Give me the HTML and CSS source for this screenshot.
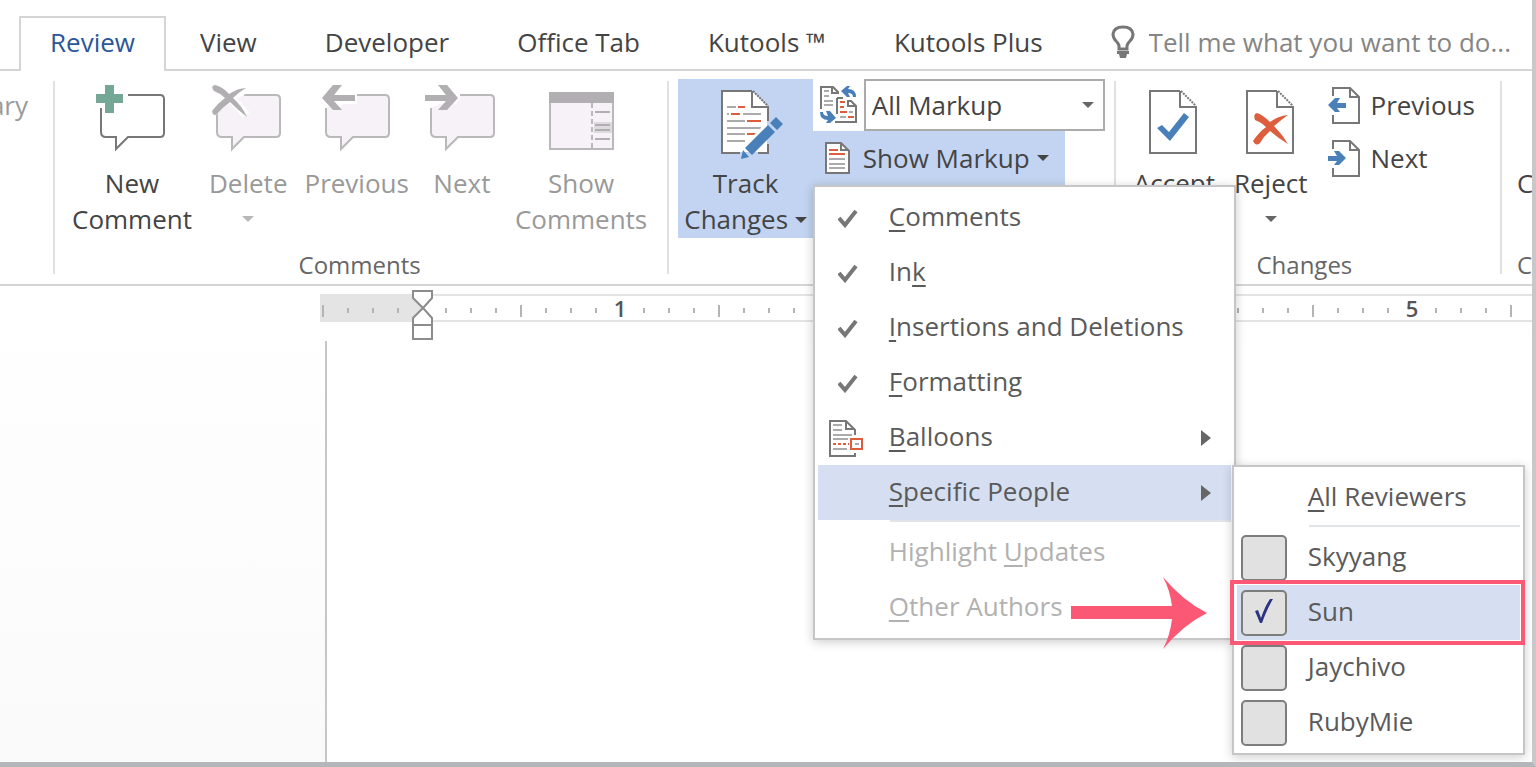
FILE: index.html
```html
<!DOCTYPE html>
<html lang="en">
<head>
<meta charset="utf-8">
<title>Document - Review</title>
<link rel="stylesheet" href="styles.css">
</head>
<body>
<svg class="defs" aria-hidden="true">
  <symbol id="bubble" viewBox="0 0 72 76">
    <path d="M32 11H64Q68 11 68 15V49Q68 53 64 53H32L20 65V53H10Q5 53 5 48V24"/>
  </symbol>
  <symbol id="page" viewBox="0 0 72 76">
    <path d="M12 7H42L58 23V69H12Z" fill="#fff" stroke="none"/>
    <path d="M42 7H12V69H58V23H42V7" fill="none" stroke="#777" stroke-width="2"/>
    <path d="M43 7L58 22" fill="none" stroke="#777" stroke-width="2" stroke-dasharray="2 1"/>
  </symbol>
  <symbol id="tick" viewBox="0 0 20 20">
    <path d="M1 10L7 17L18 3" fill="none" stroke="#777" stroke-width="4"/>
  </symbol>
</svg>

<div class="app">
  <nav class="tabs">
    <button class="tab tab-active" type="button">Review</button>
    <button class="tab" type="button">View</button>
    <button class="tab" type="button">Developer</button>
    <button class="tab" type="button">Office Tab</button>
    <button class="tab" type="button">Kutools ™</button>
    <button class="tab" type="button">Kutools Plus</button>
    <label class="tell">
      <svg width="24" height="34" viewBox="0 0 24 34" aria-hidden="true"><path d="M8 24V21Q8 19 5 16Q2 13 2 9Q3 2 12 2Q21 2 22 9Q22 13 19 16Q16 19 16 21V24Z" fill="none" stroke="#777" stroke-width="3"/><path d="M6 26H18V29H16L15 33H9L8 29H6Z" fill="#777"/></svg>
      <input type="text" placeholder="Tell me what you want to do..." aria-label="Tell me what you want to do">
    </label>
  </nav>

  <div class="ribbon">
    <section class="group group-first">
      <div class="group-body"><span class="cut-label">ary</span></div>
    </section>

    <section class="group group-comments">
      <div class="group-body">
        <button class="big" type="button">
          <svg class="icon" viewBox="0 0 72 76"><use href="#bubble" width="72" height="76" class="line-dark"/><path d="M-1 0H28V22H-1Z" fill="#fff"/><path d="M9 1H18V10H27V19H18V29H9V19H0V10H9Z" fill="#74a795"/></svg>
          <span>New<br>Comment</span>
        </button>
        <button class="big" type="button" disabled>
          <svg class="icon" viewBox="0 0 72 76"><use href="#bubble" width="72" height="76" class="line-light"/><path d="M3 4Q20 12 34 31M1 28Q15 9 35 5" fill="none" stroke="#fff" stroke-width="9"/><path d="M3 1Q11 3 17 10Q26 4 34 4Q27 8 21 14Q30 22 35 33Q26 26 18 18Q11 23 5 30Q1 33 0 27Q6 19 13 14Q8 9 2 7Q-2 2 3 1Z" fill="#b1afb1"/></svg>
          <span>Delete</span>
          <svg class="caret" viewBox="0 0 12 6"><path d="M0 0H12L6 6Z"/></svg>
        </button>
        <button class="big" type="button" disabled>
          <svg class="icon" viewBox="0 0 72 76"><use href="#bubble" width="72" height="76" class="line-light"/><path d="M0 8H36V20H22L20 23H0Z" fill="#fff"/><path d="M1 14L12 1H21L13 11H34V17H13L21 26H12Z" fill="#b1afb1"/></svg>
          <span>Previous</span>
        </button>
        <button class="big" type="button" disabled>
          <svg class="icon" viewBox="0 0 72 76"><use href="#bubble" width="72" height="76" class="line-light"/><path d="M-2 8H34V14L30 20H-2Z" fill="#fff"/><path d="M32 14L21 1H12L20 11H-1V17H20L12 26H21Z" fill="#b1afb1"/></svg>
          <span>Next</span>
        </button>
        <button class="big" type="button" disabled>
          <svg class="icon" viewBox="0 0 72 76"><path d="M5 9H68V65H5Z" fill="#f6f2f7" stroke="#bab8ba" stroke-width="2"/><path d="M4 8H69V19H4Z" fill="#b1afb1"/><path d="M47 19V65" stroke="#bab8ba" stroke-width="2" stroke-dasharray="5 3"/><path d="M49 38H67V49H49Z" fill="#dedbdf"/><path d="M50 28H65M50 41H65M50 46H65M50 55H65" stroke="#b1afb1" stroke-width="2"/></svg>
          <span>Show<br>Comments</span>
        </button>
      </div>
      <h2 class="group-name">Comments</h2>
    </section>

    <section class="group group-tracking">
      <div class="group-body">
        <button class="big big-on" type="button">
          <svg class="icon" viewBox="0 0 72 76"><use href="#page" width="72" height="76"/><path d="M17 23H26M17 30H19M33 30H51M17 37H35M17 44H51M17 50H35M17 57H35" stroke="#ababab" stroke-width="2"/><path d="M28 23H35M21 30H30M37 37H51M37 50H47" stroke="#dc5e3c" stroke-width="2"/><path d="M31 68L35 60L57 38V68Z" fill="#fff"/><path d="M57 37H60V60H57ZM30 68H48V71H30Z" fill="#c2d4f1"/><path d="M35 64L58 41L65 48L42 71ZM60 39L66 33L73 40L67 46ZM33 66L39 73L31 75Z" fill="#4a80ba"/></svg>
          <span>Track<br>Changes <svg class="caret caret-inline" viewBox="0 0 12 6"><path d="M0 0H12L6 6Z"/></svg></span>
        </button>
        <div class="stack">
          <div class="markup-row">
            <svg class="markup-icon" viewBox="0 0 38 38" aria-hidden="true"><path d="M2 24V2H14L19 7V9M13 2V8H19" fill="none" stroke="#777" stroke-width="2"/><path d="M5 6H10M5 11H10M5 16H14M5 20H14" stroke="#ababab" stroke-width="2"/><path d="M18 13H24M18 13V29M16 37H37V21L32 16H29V21H37" fill="none" stroke="#777" stroke-width="2"/><path d="M21 17H26M21 22H25M21 27H28M29 32H35" stroke="#dc5e3c" stroke-width="2"/><path d="M30 27H34M21 32H27" stroke="#ababab" stroke-width="2"/><path d="M22 6L28 1H31L29 4Q37 4 37 12H34Q34 8 29 8L31 12H28ZM1 27H4Q4 31 9 31L7 26H11L17 33L11 38H7L9 35Q1 35 1 27Z" fill="#4a80ba"/></svg>
            <div class="select-box">
              <select aria-label="Display for review"><option>All Markup</option></select>
              <svg class="caret" viewBox="0 0 12 6"><path d="M0 0H12L6 6Z"/></svg>
            </div>
          </div>
          <button class="show-markup" type="button" aria-expanded="true">
            <svg width="26" height="34" viewBox="0 0 26 34"><path d="M2 2H17L25 10V32H2Z" fill="#fff" stroke="#777" stroke-width="2"/><path d="M17 2V9H25" fill="none" stroke="#777" stroke-width="2"/><path d="M5 9H14M5 13H21" stroke="#dc5e3c" stroke-width="2"/><path d="M5 18H21M5 23H21M5 27H21" stroke="#ababab" stroke-width="2"/></svg>
            <span>Show Markup</span>
            <svg class="caret" viewBox="0 0 12 6"><path d="M0 0H12L6 6Z"/></svg>
          </button>

          <div class="menu" role="menu">
            <button class="item" type="button"><svg class="tick"><use href="#tick"/></svg><span><u>C</u>omments</span></button>
            <button class="item" type="button"><svg class="tick"><use href="#tick"/></svg><span>In<u>k</u></span></button>
            <button class="item" type="button"><svg class="tick"><use href="#tick"/></svg><span><u>I</u>nsertions and Deletions</span></button>
            <button class="item" type="button"><svg class="tick"><use href="#tick"/></svg><span><u>F</u>ormatting</span></button>
            <button class="item" type="button">
              <svg class="balloon" viewBox="0 0 36 38"><path d="M27 34V37H2V2H18L27 11V16M18 2V10H27" fill="none" stroke="#777" stroke-width="2"/><path d="M5 6H14M5 11H14M5 16H24M5 20H20M5 30H19M27 25H31" stroke="#ababab" stroke-width="2"/><path d="M5 25H21" stroke="#dc5e3c" stroke-width="2" stroke-dasharray="3 2"/><path d="M23 20H34V30H23Z" fill="none" stroke="#dc5e3c" stroke-width="2"/></svg>
              <span><u>B</u>alloons</span><svg class="arrow" viewBox="0 0 10 16"><path d="M0 0L10 8L0 16Z"/></svg>
            </button>
            <button class="item item-on" type="button"><i class="blank"></i><span><u>S</u>pecific People</span><svg class="arrow" viewBox="0 0 10 16"><path d="M0 0L10 8L0 16Z"/></svg></button>
            <hr>
            <button class="item" type="button" disabled><i class="blank"></i><span>Highlight <u>U</u>pdates</span></button>
            <button class="item" type="button" disabled><i class="blank"></i><span><u>O</u>ther Authors</span></button>

            <svg class="pointer" viewBox="0 0 136 74" aria-hidden="true"><path d="M0 30H101Q99 14 92 1Q112 25 136 37Q112 49 92 73Q99 60 101 43H0Z" fill="#fb5875"/></svg>

            <div class="submenu">
              <button class="person" type="button"><i class="box-space"></i><span><u>A</u>ll Reviewers</span></button>
              <hr>
              <label class="person"><input type="checkbox"><span>Skyyang</span></label>
              <label class="person person-on"><input type="checkbox" checked><span>Sun</span><svg class="check" viewBox="0 0 20 26"><path d="M1 13L4 12L7 20Q11 8 16 1H19Q13 11 8 25H6Z" fill="#2b3480"/></svg></label>
              <label class="person"><input type="checkbox"><span>Jaychivo</span></label>
              <label class="person"><input type="checkbox"><span>RubyMie</span></label>
            </div>
          </div>
        </div>
      </div>
    </section>

    <section class="group group-changes">
      <div class="group-body">
        <button class="big" type="button">
          <svg class="icon" viewBox="0 0 72 76"><use href="#page" width="72" height="76"/><path d="M19 44L24 41L31 48L46 29L51 33L32 57Z" fill="#4a80ba"/></svg>
          <span>Accept</span>
        </button>
        <button class="big" type="button">
          <svg class="icon" viewBox="0 0 72 76"><use href="#page" width="72" height="76"/><path d="M22 29Q28 31 35 38Q43 32 53 31Q46 36 39 42Q47 50 53 60Q43 54 35 47Q29 52 25 59Q21 63 18 57Q24 48 31 43Q26 38 20 36Q18 30 22 29Z" fill="#dc5e3c"/></svg>
          <span>Reject</span>
          <svg class="caret" viewBox="0 0 12 6"><path d="M0 0H12L6 6Z"/></svg>
        </button>
        <div class="small-col">
          <button class="small" type="button"><svg viewBox="0 0 34 38"><path d="M6 10V2H23L32 11V37H6V29M23 2V11H32" fill="none" stroke="#777" stroke-width="2"/><path d="M1 19L8 12H13L10 17H19V22H10L13 26H8Z" fill="#4a80ba"/></svg><span>Previous</span></button>
          <button class="small" type="button"><svg viewBox="0 0 34 38"><path d="M6 10V2H23L32 11V37H6V29M23 2V11H32" fill="none" stroke="#777" stroke-width="2"/><path d="M19 19L12 12H7L10 17H1V22H10L7 26H12Z" fill="#4a80ba"/></svg><span>Next</span></button>
        </div>
      </div>
      <h2 class="group-name">Changes</h2>
    </section>

    <section class="group group-last">
      <div class="group-body"><span class="last-label">C</span></div>
      <h2 class="group-name">C</h2>
    </section>
  </div>

  <main class="workspace">
    <div class="ruler">
      <svg width="100%" height="50" aria-hidden="true">
        <defs><pattern id="ticks" x="-96" y="0" width="198" height="50" patternUnits="userSpaceOnUse"><path d="M24 18V23M49 18V23M74 18V23M124 18V23M149 18V23M174 18V23" stroke="#b4b4b4" stroke-width="2"/><path d="M99 15V27" stroke="#b4b4b4" stroke-width="2"/></pattern></defs>
        <rect x="0" y="4" width="100%" height="28" fill="#e4e4e4"/>
        <rect x="102" y="6" width="100%" height="24" fill="#fff"/>
        <rect width="100%" height="50" fill="url(#ticks)"/>
        <text x="300" y="27">1</text>
        <text x="1092" y="27">5</text>
        <path d="M93 1H112V8L103 18L112 28V49H93V28L103 18L93 8Z" fill="#fff" stroke="#8c8c8c" stroke-width="2"/><path d="M93 35H112" stroke="#8c8c8c" stroke-width="2"/>
      </svg>
    </div>
    <div class="paper"></div>
  </main>
</div>
</body>
</html>
```

FILE: styles.css
```css
* { box-sizing: border-box; }

body {
  margin: 0;
  background: #fff;
  color: #444;
  font: 26px/36px "Open Sans", "Noto Sans", sans-serif;
}

button, input, select {
  margin: 0;
  padding: 0;
  border: 0;
  background: none;
  color: inherit;
  font: inherit;
}

.defs { position: absolute; width: 0; height: 0; }

.app {
  display: flex;
  flex-direction: column;
  min-height: 100vh;
  overflow: hidden;
  border-right: 4px solid #c6c8ca;
  border-bottom: 5px solid #b4b7b9;
}

/* Tabs */
.tabs {
  display: flex;
  align-items: stretch;
  height: 71px;
  padding: 16px 0 0 19px;
  box-shadow: inset 0 -2px #d5d5d5;
}
.tab { padding: 0 34px 3px; white-space: nowrap; }
.tab-active {
  padding: 0 29px 5px;
  border: 2px solid #d5d5d5;
  border-bottom: 0;
  background: #fff;
  color: #2b579a;
}
.tell { display: flex; flex: 1; align-items: center; gap: 14px; padding: 0 0 3px 34px; }
.tell svg { flex: none; }
.tell input { flex: 1; min-width: 0; }
.tell input::placeholder { color: #858585; opacity: 1; }

/* Ribbon */
.ribbon {
  display: flex;
  height: 215px;
  padding-top: 8px;
  border-bottom: 2px solid #d5d5d5;
}
.group { display: flex; flex-direction: column; position: relative; }
.group::after {
  content: "";
  position: absolute;
  right: 0;
  top: 2px;
  bottom: 10px;
  width: 2px;
  background: #e1e1e1;
}
.group-last::after { display: none; }
.group-body { display: flex; flex: 1; align-items: flex-start; }
.group-name {
  margin: 0;
  padding-bottom: 1px;
  color: #666;
  font-size: 24px;
  font-weight: 400;
  line-height: 36px;
  text-align: center;
}
.group-first { width: 55px; overflow: hidden; color: #9a9a9a; }
.group-first .group-body { justify-content: flex-end; }
.cut-label { padding: 8px 27px 0 0; }
.group-comments { padding: 0 22px 0 17px; }
.group-comments .group-body { gap: 17px; }
.group-tracking { padding: 0 11px 0 9px; }
.group-changes { padding: 0 27px 0 18px; }
.group-changes .group-body { gap: 19px; }
.group-last { flex: 1; padding-left: 15px; overflow: hidden; }
.last-label { padding-top: 86px; }

.big {
  display: flex;
  flex-direction: column;
  align-items: center;
  min-width: 72px;
  padding-top: 5px;
  white-space: nowrap;
}
.big:disabled { color: #999; }
.big-on { padding: 5px 6px 1px; background: #c2d4f1; }
.icon { width: 72px; height: 76px; margin-bottom: 5px; overflow: visible; }
.line-dark { fill: #fff; stroke: #777; stroke-width: 2px; }
.line-light { fill: #f6f2f7; stroke: #bab8ba; stroke-width: 2px; }

.caret { width: 12px; height: 6px; fill: #666; }
.big > .caret { margin-top: 15px; }
.big:disabled > .caret { fill: #b8b8b8; }
.caret-inline { vertical-align: 6px; fill: #444; }

.stack { position: relative; }
.markup-row { display: flex; height: 52px; }
.markup-icon { width: 38px; height: 38px; margin: 6px 7px 0 6px; }
.select-box { position: relative; width: 241px; }
.select-box select {
  width: 100%;
  height: 100%;
  padding-left: 6px;
  border: 2px solid #ababab;
  background: #fff;
  appearance: none;
}
.select-box .caret { position: absolute; right: 11px; top: 23px; }
.show-markup {
  display: flex;
  align-items: center;
  gap: 13px;
  height: 54px;
  padding: 0 16px 0 11px;
  background: #c2d4f1;
  white-space: nowrap;
}
.show-markup .caret { margin-left: -6px; fill: #444; }

.small-col { display: flex; flex-direction: column; }
.small { display: flex; align-items: center; gap: 10px; height: 53px; padding-bottom: 2px; }
.small svg { width: 34px; height: 38px; }

/* Drop-down menu and its submenu */
.menu, .submenu {
  position: absolute;
  border: 2px solid #c6c6c6;
  background: #fff;
  color: #5a5a5a;
  box-shadow: 0 2px 10px rgba(0, 0, 0, .2);
}
.menu { z-index: 2; top: 106px; left: 0; width: 423px; padding: 3px; }
.menu u { text-decoration-thickness: 2px; text-underline-offset: 4px; text-decoration-skip-ink: none; }
.menu span { padding-bottom: 4px; }
.item {
  display: flex;
  align-items: center;
  width: 100%;
  height: 55px;
  padding-right: 20px;
  text-align: left;
  white-space: nowrap;
}
.item:disabled { color: #b1b1b1; }
.item-on, .person-on { background: #d5dff1; }
.item span { flex: 1; }
.tick { width: 20px; height: 20px; margin: 0 31px 0 20px; }
.balloon { width: 36px; height: 38px; margin: 0 25px 0 10px; }
.blank { width: 71px; }
.arrow { width: 10px; height: 16px; fill: #666; }
.menu hr { height: 2px; margin: 0 0 3px 72px; border: 0; background: #e1e4e8; }

.submenu { z-index: 1; top: 278px; left: 417px; width: 293px; padding: 3px; }
.person {
  display: flex;
  position: relative;
  align-items: center;
  gap: 21px;
  width: 100%;
  height: 55px;
  padding-left: 4px;
  text-align: left;
  white-space: nowrap;
}
.person input, .box-space { width: 46px; height: 46px; }
.person input {
  appearance: none;
  border: 2px solid #7d7d7d;
  border-radius: 5px;
  background: #e1e1e1;
}
.person-on::after {
  content: "";
  position: absolute;
  inset: -5px -5px -5px -7px;
  border: 4px solid #fb5875;
}
.check { position: absolute; left: 17px; top: 13px; width: 20px; height: 26px; }
.submenu hr { margin: 0 0 3px 72px; }
.pointer { position: absolute; left: 256px; top: 389px; width: 136px; height: 74px; }

/* Document area */
.workspace {
  display: flex;
  flex: 1;
  flex-direction: column;
  padding: 4px 0 0 320px;
  background: linear-gradient(#fff, #fafafa);
}
.ruler { height: 51px; }
.ruler svg { display: block; }
.ruler text { fill: #555; font-size: 22px; font-weight: 600; text-anchor: middle; }
.paper { flex: 1; margin-left: 5px; border-left: 2px solid #c6c6c6; background: #fff; }
```
